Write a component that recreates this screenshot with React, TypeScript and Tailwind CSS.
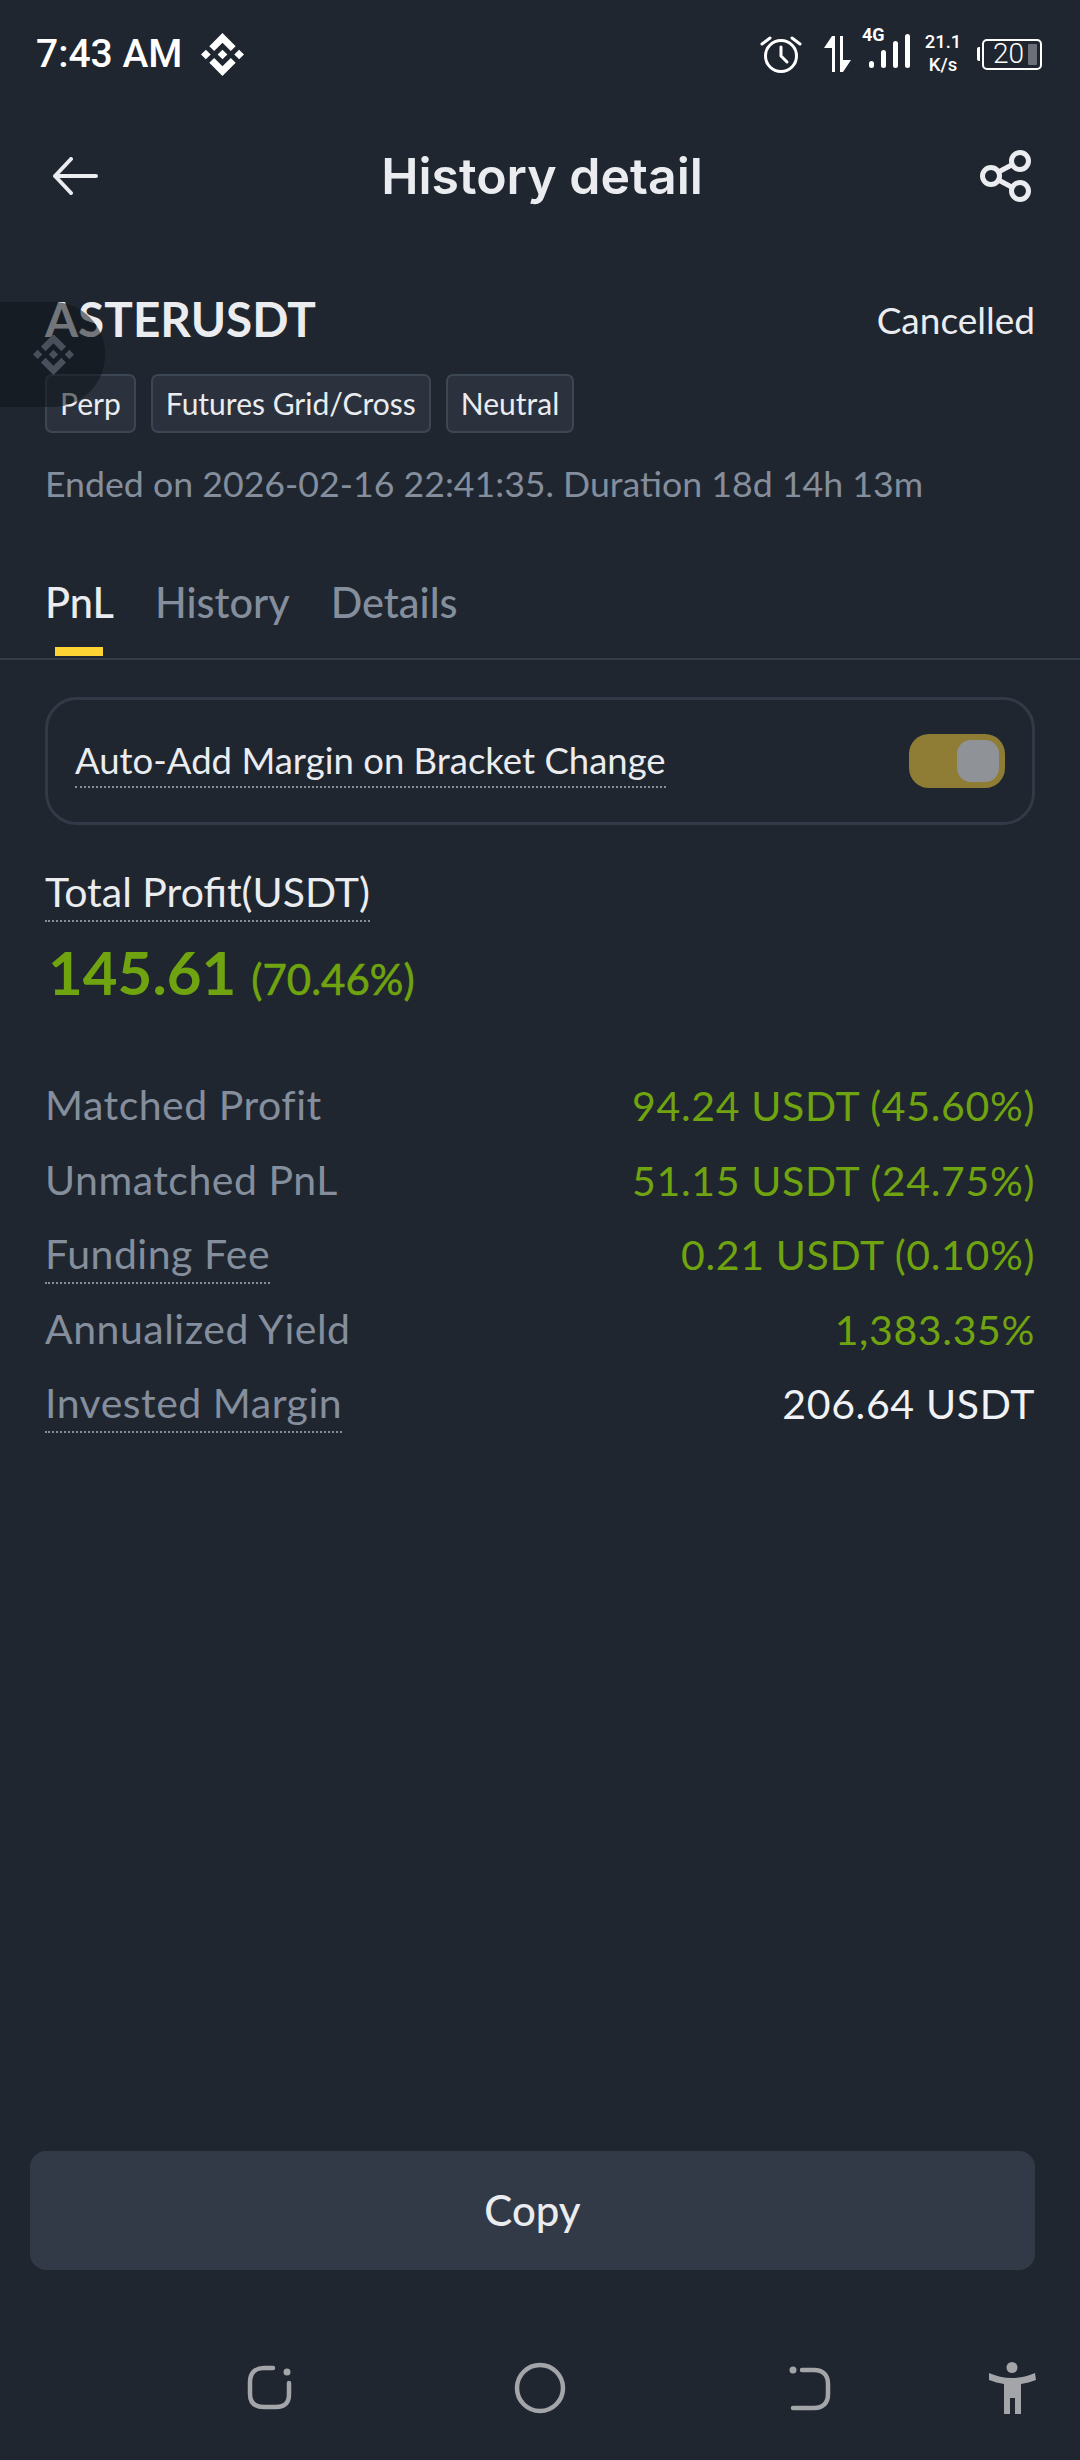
import React from "react";
import { SiBinance } from "react-icons/si";

const body = { fontFamily: "Lato, 'Open Sans', sans-serif" };
const green = "text-[#6fa30f]";

function Row({ label, value, dotted, white }: { label: string; value: string; dotted?: boolean; white?: boolean }) {
  return (
    <div className="flex h-[74.5px] items-center justify-between">
      <span className={`pb-[3px] pt-[3px] text-[41px] leading-[50px] tracking-[0.5px] text-[#848e9c] ${dotted ? "border-b-2 border-dotted border-[#848e9c]" : "border-b-2 border-transparent"}`}>{label}</span>
      <span className={`text-[41px] leading-[50px] tracking-[0.65px] ${white ? "text-[#f0f2f5]" : green}`}>{value}</span>
    </div>
  );
}

function Tag({ children }: { children: React.ReactNode }) {
  return (
    <span className="flex h-[59px] items-center rounded-[7px] border-2 border-[#3d4653] bg-[#2b323d] px-[13px] text-[30px] text-[#eaecef]">
      {children}
    </span>
  );
}

function StatusRight() {
  return (
    <div className="flex items-center text-white" style={{ fontFamily: "Roboto, sans-serif" }}>
      <svg width="42" height="38" viewBox="0 0 42 38" fill="none" stroke="white" strokeWidth="3" strokeLinecap="round" className="mr-[21px]">
        <circle cx="21" cy="21" r="15.5" />
        <path d="M21 12v9l6 6" />
        <path d="M2 9l8-6M40 9l-8-6" strokeWidth="3" />
      </svg>
      <svg width="28" height="36" viewBox="0 0 28 36" fill="white" className="mr-[13px]">
        <path d="M9 0v36h3V0zM9 0L1 12h8z" />
        <path d="M17 0h3v36h-3zM20 36l8-12h-8z" />
      </svg>
      <div className="relative mr-[13px] h-[40px] w-[48px]">
        <span className="absolute left-[-2px] top-[-9px] text-[18px] font-bold leading-[20px]">4G</span>
        <svg width="48" height="40" viewBox="0 0 48 40" fill="white" className="absolute left-0 top-0">
          <rect x="5" y="27" width="5" height="7" rx="2.5" />
          <rect x="17" y="16" width="5" height="18" rx="2.5" />
          <rect x="29" y="7" width="5" height="27" rx="2.5" />
          <rect x="41" y="0" width="5" height="34" rx="2.5" />
        </svg>
      </div>
      <div className="mr-[16px] flex w-[36px] flex-col items-center text-[18.5px] font-medium leading-[23px]">
        <span>21.1</span>
        <span>K/s</span>
      </div>
      <div className="flex items-center">
        <span className="mr-[2px] h-[14px] w-[3px] rounded-l-[2px] bg-white" />
        <div className="flex h-[31px] w-[60px] items-center justify-end rounded-[5px] border-2 border-white pr-[3px]">
          <span className="mr-[4px] text-[28px] font-light leading-none">20</span>
          <span className="h-[21px] w-[9px] rounded-[1px] bg-[#6a6f78]" />
        </div>
      </div>
    </div>
  );
}

export default function App() {
  return (
    <div className="relative flex h-[2460px] w-[1080px] flex-col overflow-hidden bg-[#1f2630]" style={body}>
      <div className="flex h-[108px] items-center justify-between pl-[36px] pr-[38px] text-white">
        <div className="flex items-center" style={{ fontFamily: "Roboto, sans-serif" }}>
          <span className="text-[39px] font-medium leading-none">7:43 AM</span>
          <SiBinance size={43} className="ml-[19px]" />
        </div>
        <StatusRight />
      </div>

      <header className="relative flex h-[136px] items-center justify-between pl-[52px] pr-[48px]">
        <svg width="46" height="38" viewBox="0 0 46 38" fill="none" stroke="#eaecef" strokeWidth="4" strokeLinecap="round" strokeLinejoin="round">
          <path d="M44 19H3M19 2L3 19l16 17" />
        </svg>
        <h1 className="ml-[6px] text-[50px] font-semibold leading-none text-[#eaecef]" style={{ fontFamily: "Inter, sans-serif" }}>History detail</h1>
        <svg width="52" height="52" viewBox="0 0 52 52" fill="none" stroke="#eaecef" strokeWidth="5">
          <circle cx="40" cy="11" r="8.5" />
          <circle cx="11" cy="26" r="8.5" />
          <circle cx="40" cy="41" r="8.5" />
          <path d="M18.5 22l14-7.5M18.5 30l14 7.5" />
        </svg>
      </header>

      <section className="px-[45px]">
        <div className="mt-[45px] flex h-[60px] items-center justify-between">
          <span className="text-[47.7px] font-bold leading-none text-[#eaecef]">ASTERUSDT</span>
          <span className="text-[37px] leading-none text-[#eaecef]">Cancelled</span>
        </div>
        <div className="mt-[25px] flex gap-[15px]">
          <Tag>Perp</Tag>
          <Tag>Futures Grid/Cross</Tag>
          <Tag>Neutral</Tag>
        </div>
        <p className="mt-[30px] text-[35.7px] leading-[42px] text-[#848e9c]">Ended on 2026-02-16 22:41:35. Duration 18d 14h 13m</p>
      </section>

      <nav className="mt-[72px] flex h-[83px] gap-[41px] border-b-2 border-[#333b47] px-[45px]">
        <div className="relative flex flex-col">
          <span className="text-[41.5px] font-medium leading-[50px] text-[#eaecef]">PnL</span>
          <span className="absolute bottom-[2px] left-[10px] h-[9px] w-[48px] bg-[#fcd535]" />
        </div>
        <span className="text-[41.5px] font-medium leading-[50px] text-[#848e9c]">History</span>
        <span className="text-[41.5px] font-medium leading-[50px] text-[#848e9c]">Details</span>
      </nav>

      <section className="px-[45px]">
        <div className="mt-[37px] flex h-[128px] items-center justify-between rounded-[32px] border-[3px] border-[#333a47] pl-[27px] pr-[27px]">
          <span className="border-b-2 border-dotted border-[#848e9c] pb-[3px] pt-[3px] text-[36.5px] leading-[46px] text-[#eaecef]">Auto-Add Margin on Bracket Change</span>
          <div className="flex h-[54px] w-[96px] items-center justify-end rounded-[20px] bg-[#8f7d36] pr-[6px]">
            <span className="h-[42px] w-[42px] rounded-[14px] bg-[#8f9296]" />
          </div>
        </div>

        <div className="mt-[42px] flex">
          <span className="border-b-2 border-dotted border-[#848e9c] pb-[3px] text-[41px] leading-[50px] text-[#eaecef]">Total Profit(USDT)</span>
        </div>
        <div className={`mt-[16px] flex items-baseline pl-[3px] ${green}`}>
          <span className="text-[60px] font-bold leading-[68px]">145.61</span>
          <span className="ml-[15px] text-[42px] leading-[68px] [-webkit-text-stroke:0.6px_#6fa30f]">(70.46%)</span>
        </div>

        <div className="mt-[56px] flex flex-col">
          <Row label="Matched Profit" value="94.24 USDT (45.60%)" />
          <Row label="Unmatched PnL" value="51.15 USDT (24.75%)" />
          <Row label="Funding Fee" value="0.21 USDT (0.10%)" dotted />
          <Row label="Annualized Yield" value="1,383.35%" />
          <Row label="Invested Margin" value="206.64 USDT" dotted white />
        </div>
      </section>

      <div className="mt-auto pl-[30px] pr-[45px]">
        <button className="flex h-[119px] w-full items-center justify-center rounded-[16px] bg-[#333a47] text-[42px] font-medium text-[#eaecef]">Copy</button>
      </div>

      <footer className="relative mt-[40px] h-[150px]">
        <svg className="absolute left-[246px] top-[54px]" width="50" height="50" viewBox="0 0 50 50" fill="none" stroke="#a3a5a9" strokeWidth="4.5" strokeLinecap="round">
          <path d="M27 4H18C9 4 4 9 4 18v12c0 9 5 13 14 13h12c9 0 13-4 13-13V19" />
          <circle cx="41" cy="8" r="3.5" fill="#a3a5a9" stroke="none" />
        </svg>
        <svg className="absolute left-[514px] top-[51px]" width="52" height="54" viewBox="0 0 52 54" fill="none" stroke="#a3a5a9" strokeWidth="4.5">
          <circle cx="26" cy="27" r="23" />
        </svg>
        <svg className="absolute left-[786px] top-[54px]" width="48" height="50" viewBox="0 0 48 50" fill="none" stroke="#a3a5a9" strokeWidth="4.5" strokeLinecap="round">
          <path d="M16 6h12c9 0 14 5 14 14v10c0 9-5 14-14 14H7" />
          <circle cx="7" cy="6" r="3.5" fill="#a3a5a9" stroke="none" />
        </svg>
        <svg className="absolute left-[988px] top-[52px]" width="50" height="52" viewBox="0 0 50 52" fill="#a3a5a9">
          <circle cx="24" cy="5.5" r="5.5" />
          <path d="M1 11C8 14 16 16 24 16S40 14 47 11L48 18C43 20 38 21 33 22V52H27V36H22V52H16V22C11 21 6 20 1 18Z" />
        </svg>
      </footer>

      <div className="absolute left-0 top-[302px] flex h-[105px] w-[105px] items-center justify-center rounded-r-[52px] bg-[#0f141a]/55">
        <SiBinance size={41} className="ml-[2px] text-[#4a505b]" />
      </div>
    </div>
  );
}
